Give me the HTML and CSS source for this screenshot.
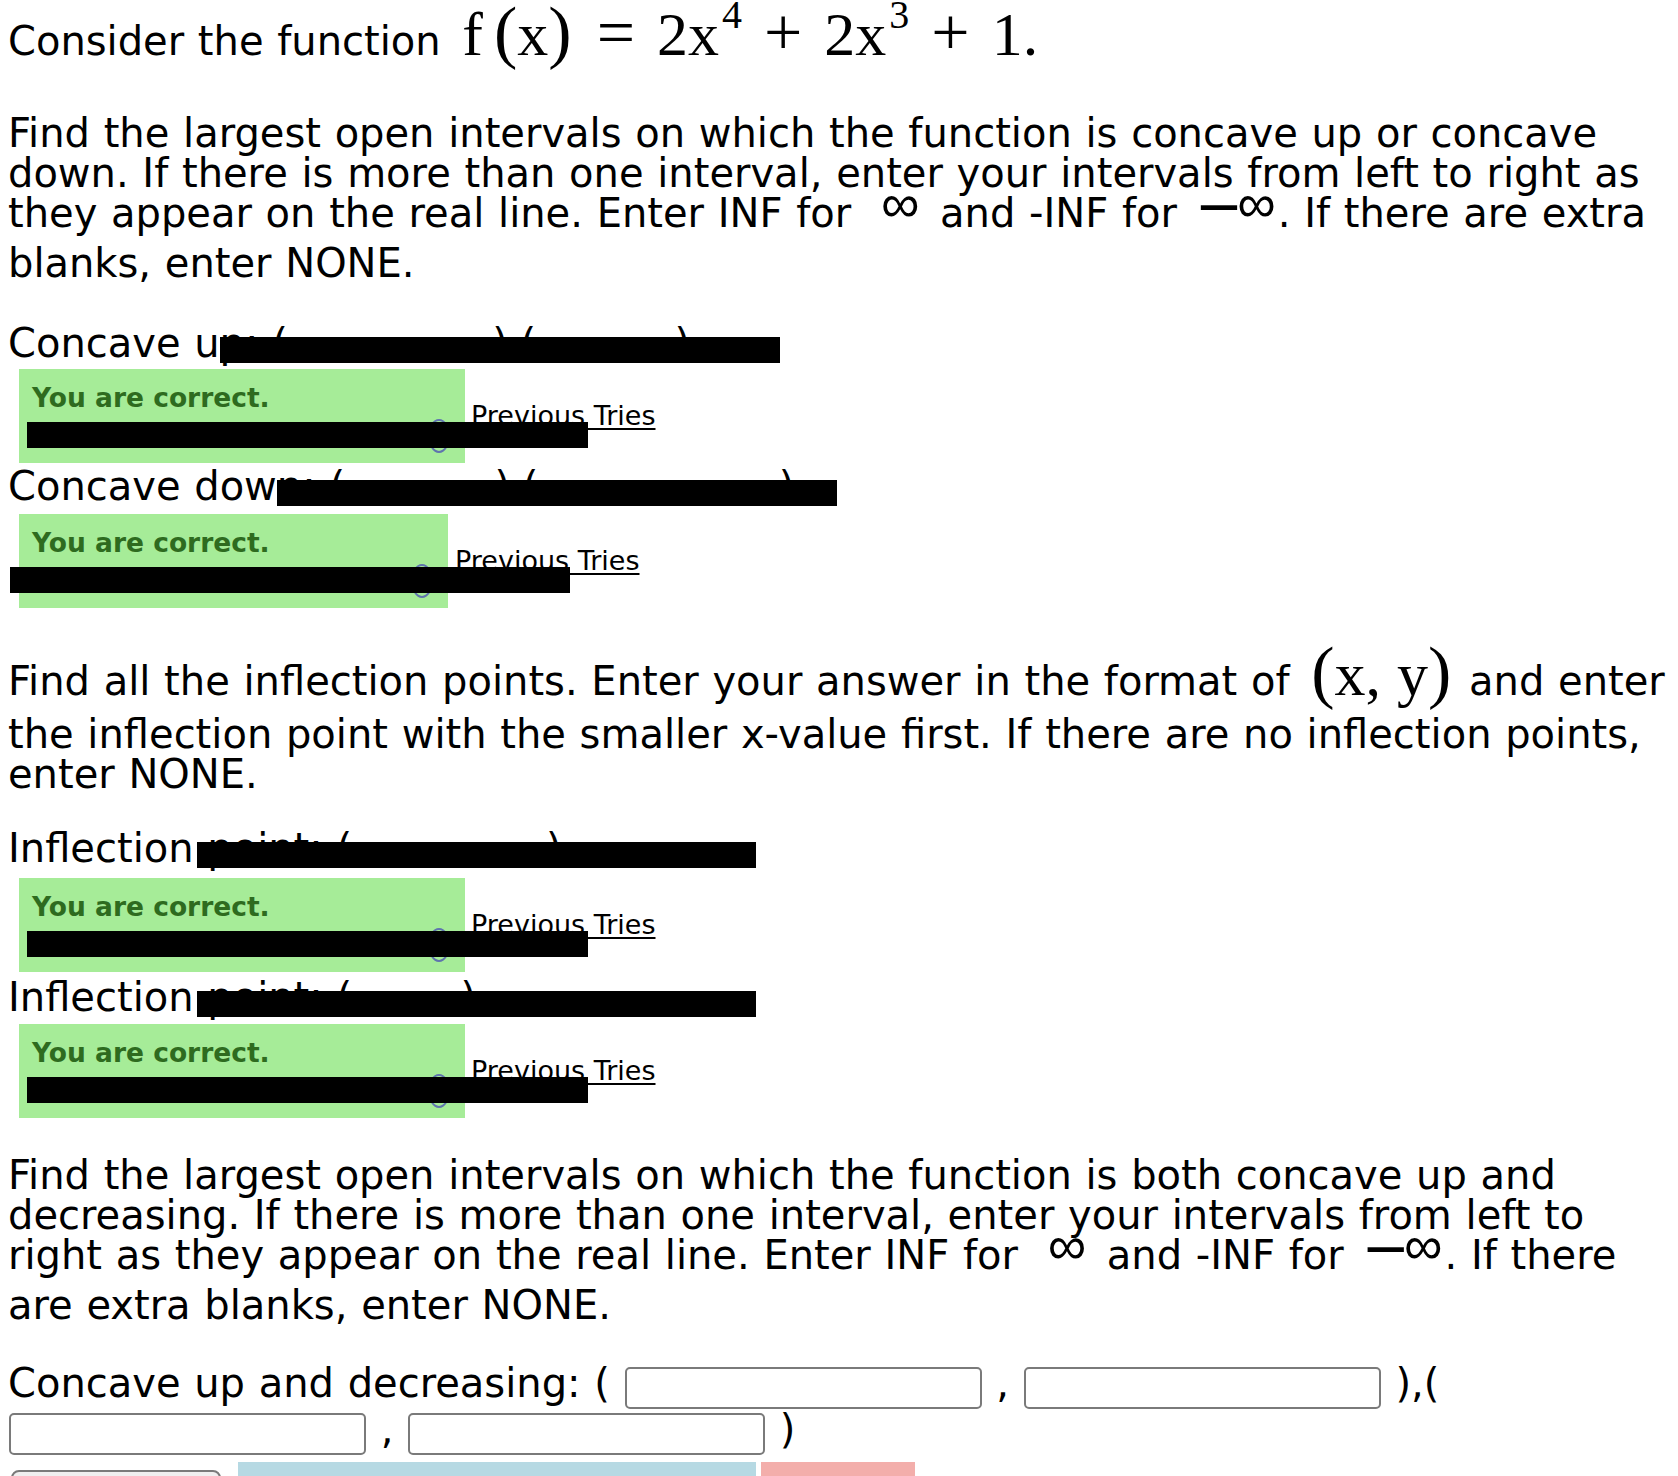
FILE: index.html
```html
<!DOCTYPE html>
<html lang="en">
<head>
<meta charset="utf-8">
<title>Concavity and inflection points</title>
<link rel="stylesheet" href="styles.css">
</head>
<body>
<div class="problem">
  <div class="intro">Consider the function <span class="math fx"><span class="fn">f</span><span class="paren">(</span><span>x</span><span class="paren">)</span><span class="mo eq">=</span><span>2</span><span>x</span><sup>4</sup><span class="mo">+</span><span>2</span><span>x</span><sup>3</sup><span class="mo">+</span><span>1</span><span>.</span></span></div>

  <p class="text p1">Find the largest open intervals on which the function is concave up or concave down. If there is more than one interval, enter your intervals from left to right as they appear on the real line. Enter INF for <span class="inf">∞</span> and -INF for <span class="inf neg"><span class="minus">−</span>∞</span>. If there are extra blanks, enter NONE.</p>

  <div class="answer-row row-up">Concave up: (<span class="ans w70"></span>, <span class="ans w108"></span>),(<span class="ans w63"></span>, <span class="ans w49"></span>)<span class="redact"></span></div>
  <div class="feedback-line fb-a">
    <div class="feedback">
      <div class="fb-title">You are correct.</div>
      <span class="ring"></span>
      <span class="redact fb-redact"></span>
    </div>
    <a class="prev" href="#">Previous Tries</a>
  </div>

  <div class="answer-row row-down">Concave down: (<span class="ans w90"></span>, <span class="ans w33"></span>),(<span class="ans w113"></span>, <span class="ans w101"></span>)<span class="redact"></span></div>
  <div class="feedback-line fb-b">
    <div class="feedback narrow">
      <div class="fb-title">You are correct.</div>
      <span class="ring"></span>
      <span class="redact fb-redact"></span>
    </div>
    <a class="prev" href="#">Previous Tries</a>
  </div>

  <p class="text p2">Find all the inflection points. Enter your answer in the format of <span class="math pt"><span class="paren">(</span><span>x</span><span>,</span><span class="my">y</span><span class="paren">)</span></span> and enter the inflection point with the smaller x-value first. If there are no inflection points, enter NONE.</p>

  <div class="answer-row row-infl row-i1">Inflection point: (<span class="ans w60"></span>, <span class="ans w23"></span>, <span class="ans w58"></span>)<span class="redact"></span></div>
  <div class="feedback-line fb-c">
    <div class="feedback">
      <div class="fb-title">You are correct.</div>
      <span class="ring"></span>
      <span class="redact fb-redact"></span>
    </div>
    <a class="prev" href="#">Previous Tries</a>
  </div>

  <div class="answer-row row-infl row-i2">Inflection point: (<span class="ans w60"></span>, <span class="ans w22"></span>)<span class="redact"></span></div>
  <div class="feedback-line fb-d">
    <div class="feedback">
      <div class="fb-title">You are correct.</div>
      <span class="ring"></span>
      <span class="redact fb-redact"></span>
    </div>
    <a class="prev" href="#">Previous Tries</a>
  </div>

  <p class="text p3">Find the largest open intervals on which the function is both concave up and decreasing. If there is more than one interval, enter your intervals from left to right as they appear on the real line. Enter INF for <span class="inf">∞</span> and -INF for <span class="inf neg"><span class="minus">−</span>∞</span>. If there are extra blanks, enter NONE.</p>

  <div class="answer-entry">Concave up and decreasing: ( <input class="blank" type="text" aria-label="left endpoint of interval 1"> , <input class="blank" type="text" aria-label="right endpoint of interval 1"> ),( <input class="blank" type="text" aria-label="left endpoint of interval 2"> , <input class="blank" type="text" aria-label="right endpoint of interval 2"> )</div>

  <div class="buttons">
    <button class="btn-preview" type="button">Preview My Answers</button>
    <div class="bar-info"></div>
    <div class="bar-alert"></div>
  </div>
</div>
</body>
</html>
```
FILE: styles.css
```css
html {
  overflow: hidden;
}

body {
  margin: 0;
  padding: 0 0 0 8px;
  background: #ffffff;
  color: #000000;
  font-family: "DejaVu Sans", Verdana, sans-serif;
  font-size: 40px;
  line-height: 40px;
  word-spacing: 1px;
}

.problem {
  width: 1670px;
}

/* ---------- intro with formula ---------- */
.intro {
  margin-top: 15px;
  white-space: nowrap;
}

.math {
  font-family: "Liberation Serif", "Times New Roman", serif;
  font-size: 62px;
  line-height: 0;
  word-spacing: 0;
}

.math span,
.math sup {
  line-height: 0;
}

.fx {
  margin-left: 8px;
}

.fn {
  margin-right: 11px;
}

.paren {
  font-size: 70px;
}

.mo {
  font-size: 68px;
  margin: 0 22px;
}

.eq {
  margin-left: 25px;
}

.math sup {
  font-size: 40px;
  vertical-align: 27px;
  margin-left: 3px;
}

/* ---------- text paragraphs ---------- */
.text {
  margin: 0;
}

.p1 {
  margin-top: 52px;
}

.p2 {
  margin-top: 53px;
}

.p3 {
  margin-top: 37px;
}

.inf {
  display: inline-block;
  font-family: "Liberation Sans", Arial, sans-serif;
  font-size: 54px;
  line-height: 18px;
  vertical-align: 5px;
  padding-bottom: 31px;
  margin: 0 7px 0 16px;
  word-spacing: 0;
}

.inf.neg {
  margin: 0 2px 0 4px;
}

.minus {
  font-family: "DejaVu Sans", sans-serif;
  font-size: 58px;
  line-height: 0;
  vertical-align: -4px;
  margin-right: -6px;
}

.pt {
  display: inline-block;
  line-height: 24px;
  padding-bottom: 28px;
  margin: 0 4px 0 8px;
}

.my {
  margin-left: 16px;
}

/* ---------- answer rows (redacted) ---------- */
.answer-row {
  position: relative;
  white-space: nowrap;
}

.ans {
  display: inline-block;
  height: 0;
}

.w22 { width: 22px; }
.w23 { width: 23px; }
.w33 { width: 33px; }
.w49 { width: 49px; }
.w58 { width: 58px; }
.w60 { width: 60px; }
.w63 { width: 63px; }
.w70 { width: 70px; }
.w90 { width: 90px; }
.w101 { width: 101px; }
.w108 { width: 108px; }
.w113 { width: 113px; }

.redact {
  position: absolute;
  top: 14px;
  height: 26px;
  background: #000000;
}

.row-up {
  margin-top: 40px;
}

.row-up .redact {
  left: 212px;
  width: 560px;
}

.row-down {
  margin-top: 3px;
}

.row-down .redact {
  left: 269px;
  width: 560px;
}

.row-i1 {
  margin-top: 34px;
}

.row-i2 {
  margin-top: 5px;
}

.row-infl .redact {
  left: 189px;
  width: 559px;
}

/* ---------- feedback boxes ---------- */
.feedback-line {
  display: flex;
  align-items: center;
  margin-left: 11px;
  word-spacing: 0;
}

.fb-a { margin-top: 6px; }
.fb-b { margin-top: 8px; }
.fb-c { margin-top: 10px; }
.fb-d { margin-top: 7px; }

.feedback {
  position: relative;
  box-sizing: border-box;
  width: 446px;
  height: 94px;
  padding: 14px 13px 0;
  background: #a6ec98;
}

.feedback.narrow {
  width: 429px;
}

.fb-title {
  font-size: 26.5px;
  line-height: 30px;
  font-weight: bold;
  color: #2e6b1f;
  white-space: nowrap;
}

.ring {
  position: absolute;
  top: 50px;
  left: 409px;
  width: 18px;
  height: 30px;
  border: 2px solid #5f74ae;
  border-radius: 50%;
}

.narrow .ring {
  left: 392px;
}

.fb-redact {
  top: 53px;
  left: 8px;
  width: 561px;
}

.narrow .fb-redact {
  left: -9px;
  width: 560px;
}

.prev {
  margin-left: 6px;
  font-size: 27px;
  line-height: 30px;
  color: #000000;
  text-decoration: underline;
  text-decoration-thickness: 2px;
  text-underline-offset: 3px;
}

.fb-b .prev {
  margin-left: 7px;
}

/* ---------- live answer entry ---------- */
.answer-entry {
  margin-top: 38px;
}

.blank {
  box-sizing: border-box;
  width: 357px;
  height: 42px;
  margin: 0 1px;
  padding: 0 8px;
  border: 2px solid #7a7a7a;
  border-radius: 5px;
  background: #ffffff;
  font-family: "DejaVu Sans", Verdana, sans-serif;
  font-size: 26px;
  vertical-align: baseline;
}

/* ---------- buttons (cut off by viewport) ---------- */
.buttons {
  display: flex;
  align-items: flex-start;
  margin-top: 7px;
}

.btn-preview {
  box-sizing: border-box;
  width: 210px;
  height: 64px;
  margin: 8px 0 0 3px;
  padding: 30px 0 0;
  border: 2px solid #7a7a7a;
  border-radius: 8px;
  background: #efefef;
  font-family: "DejaVu Sans", Verdana, sans-serif;
  font-size: 22px;
  color: #000000;
}

.bar-info {
  width: 518px;
  height: 60px;
  margin-left: 17px;
  background: #b6d9e3;
}

.bar-alert {
  width: 154px;
  height: 60px;
  margin-left: 5px;
  background: #f3aeab;
}
```
